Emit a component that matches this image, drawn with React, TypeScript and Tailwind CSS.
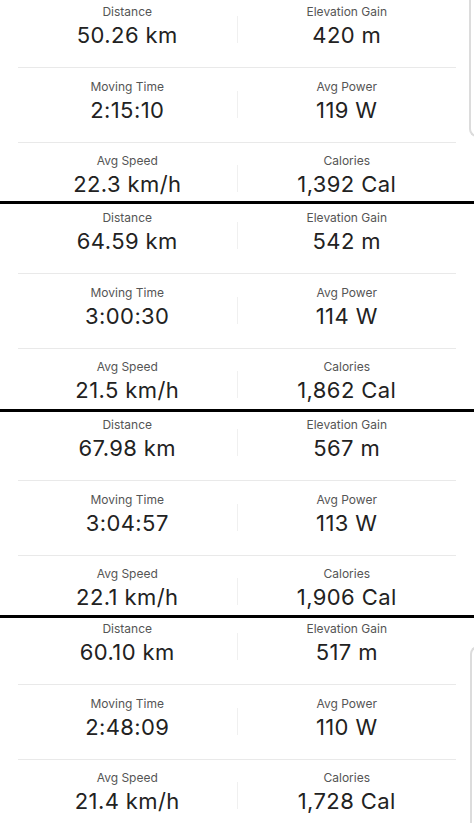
import React from "react";

type Stat = { label: string; value: string };
type Row = [Stat, Stat];

const sections: { height: number; offset: number; rows: Row[]; bar?: "top" | "bottom" }[] = [
  {
    height: 201,
    offset: -2,
    bar: "top",
    rows: [
      [{ label: "Distance", value: "50.26 km" }, { label: "Elevation Gain", value: "420 m" }],
      [{ label: "Moving Time", value: "2:15:10" }, { label: "Avg Power", value: "119 W" }],
      [{ label: "Avg Speed", value: "22.3 km/h" }, { label: "Calories", value: "1,392 Cal" }],
    ],
  },
  {
    height: 205,
    offset: 0,
    rows: [
      [{ label: "Distance", value: "64.59 km" }, { label: "Elevation Gain", value: "542 m" }],
      [{ label: "Moving Time", value: "3:00:30" }, { label: "Avg Power", value: "114 W" }],
      [{ label: "Avg Speed", value: "21.5 km/h" }, { label: "Calories", value: "1,862 Cal" }],
    ],
  },
  {
    height: 203,
    offset: -1,
    rows: [
      [{ label: "Distance", value: "67.98 km" }, { label: "Elevation Gain", value: "567 m" }],
      [{ label: "Moving Time", value: "3:04:57" }, { label: "Avg Power", value: "113 W" }],
      [{ label: "Avg Speed", value: "22.1 km/h" }, { label: "Calories", value: "1,906 Cal" }],
    ],
  },
  {
    height: 205,
    offset: -3,
    bar: "bottom",
    rows: [
      [{ label: "Distance", value: "60.10 km" }, { label: "Elevation Gain", value: "517 m" }],
      [{ label: "Moving Time", value: "2:48:09" }, { label: "Avg Power", value: "110 W" }],
      [{ label: "Avg Speed", value: "21.4 km/h" }, { label: "Calories", value: "1,728 Cal" }],
    ],
  },
];

function Cell({ s }: { s: Stat }) {
  return (
    <div className="flex-1 flex flex-col items-center pt-[6px]">
      <div className="text-[12px] leading-[16px] text-[#555555]">{s.label}</div>
      <div className="text-[22px] leading-[28px] tracking-[0.4px] text-[#222222] mt-[1px]">{s.value}</div>
    </div>
  );
}

function StatRow({ row, last }: { row: Row; last: boolean }) {
  return (
    <div className={`mx-[18px] flex h-[70px] ${last ? "" : "border-b border-[#e9e9e9] mb-[4.5px]"}`}>
      <Cell s={row[0]} />
      <div className="w-px self-start mt-[18px] h-[27px] bg-[#f0f0f0]" />
      <Cell s={row[1]} />
    </div>
  );
}

export default function App() {
  return (
    <div
      className="w-[474px] h-[823px] overflow-hidden bg-white"
      style={{ fontFamily: "Inter, 'Noto Sans', sans-serif" }}
    >
      {sections.map((sec, i) => (
        <div key={i}>
          {i > 0 && <div className="h-[3px] bg-black" />}
          <div className="relative overflow-hidden" style={{ height: sec.height }}>
            <div style={{ marginTop: sec.offset }}>
              {sec.rows.map((r, j) => (
                <StatRow key={j} row={r} last={j === sec.rows.length - 1} />
              ))}
            </div>
            {sec.bar === "top" && (
              <div className="absolute left-[469px] top-[-20px] w-[20px] h-[157px] border-l-2 border-b-2 border-[#dcdcdc] rounded-bl-[8px]" />
            )}
            {sec.bar === "bottom" && (
              <div className="absolute left-[470px] top-[28px] w-[20px] h-[200px] border-l-2 border-t-2 border-[#dcdcdc] rounded-tl-[8px]" />
            )}
          </div>
        </div>
      ))}
    </div>
  );
}
